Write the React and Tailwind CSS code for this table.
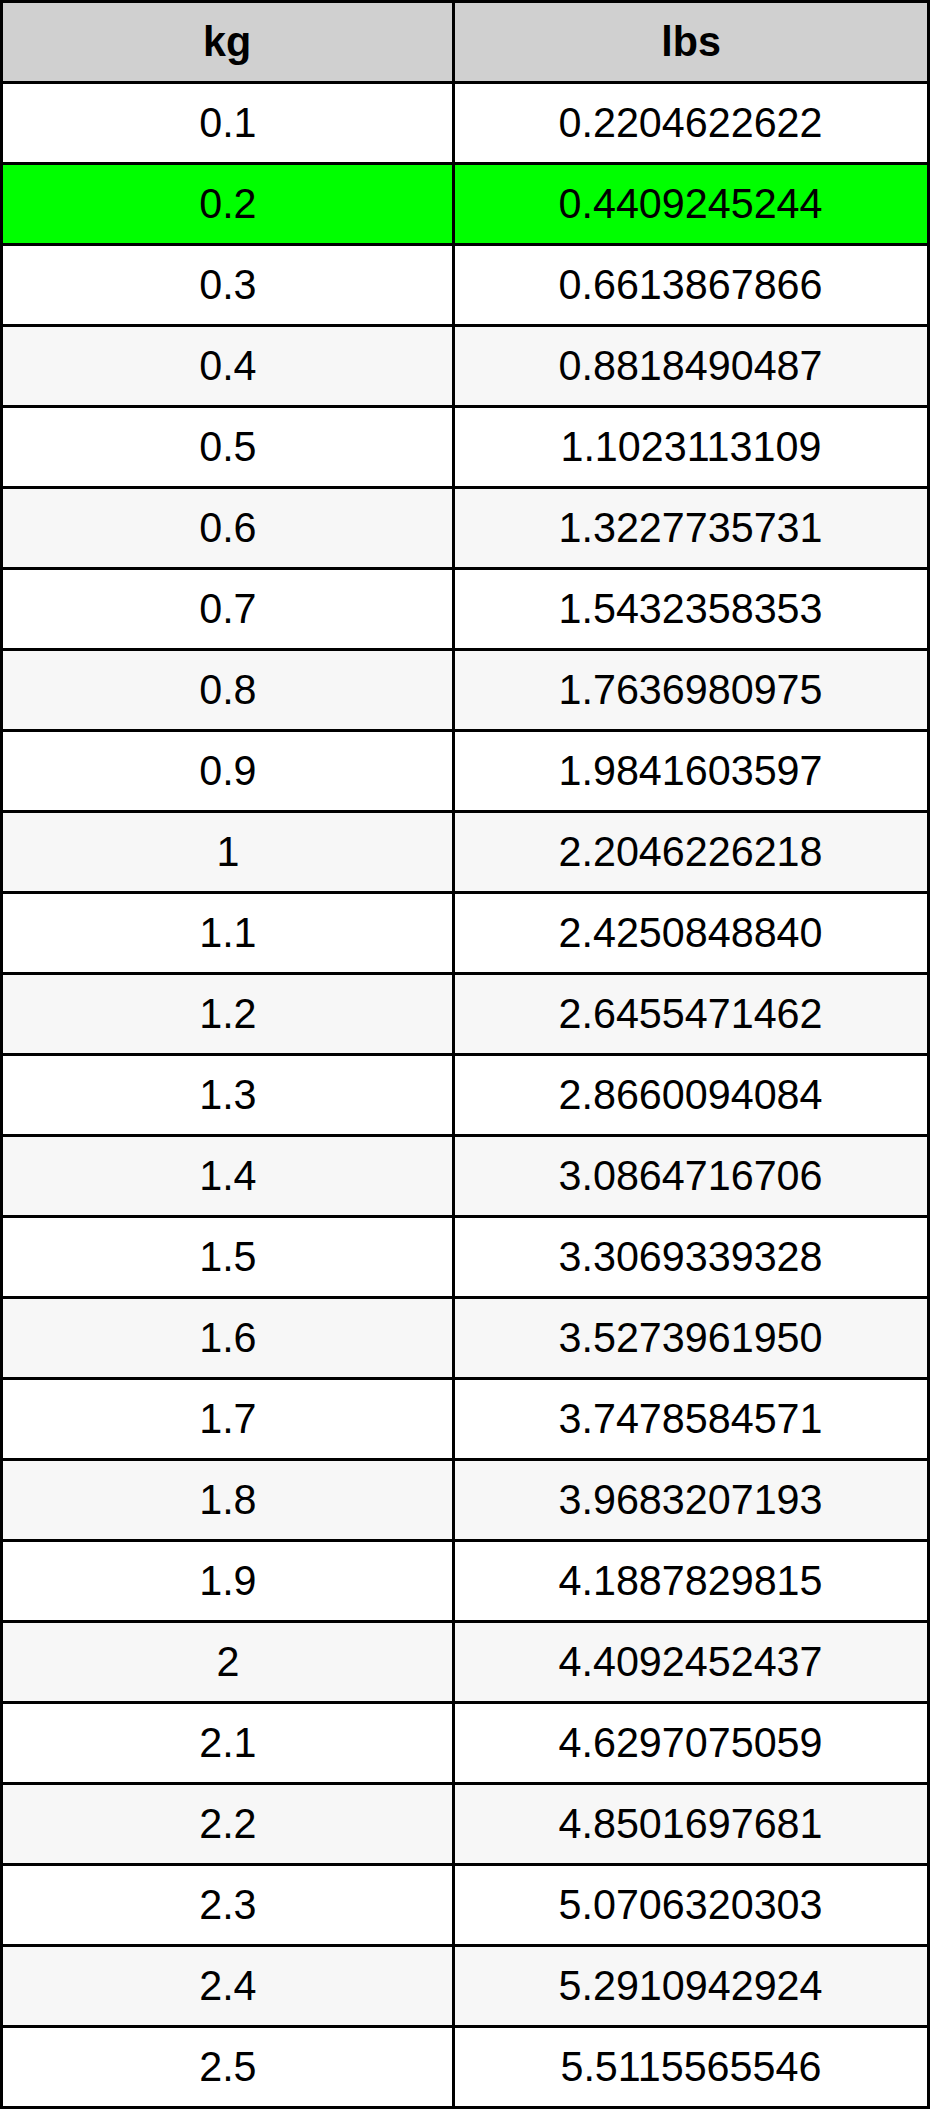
import React from 'react';

const rows = [
  ['0.1', '0.2204622622'],
  ['0.2', '0.4409245244'],
  ['0.3', '0.6613867866'],
  ['0.4', '0.8818490487'],
  ['0.5', '1.1023113109'],
  ['0.6', '1.3227735731'],
  ['0.7', '1.5432358353'],
  ['0.8', '1.7636980975'],
  ['0.9', '1.9841603597'],
  ['1', '2.2046226218'],
  ['1.1', '2.4250848840'],
  ['1.2', '2.6455471462'],
  ['1.3', '2.8660094084'],
  ['1.4', '3.0864716706'],
  ['1.5', '3.3069339328'],
  ['1.6', '3.5273961950'],
  ['1.7', '3.7478584571'],
  ['1.8', '3.9683207193'],
  ['1.9', '4.1887829815'],
  ['2', '4.4092452437'],
  ['2.1', '4.6297075059'],
  ['2.2', '4.8501697681'],
  ['2.3', '5.0706320303'],
  ['2.4', '5.2910942924'],
  ['2.5', '5.5115565546'],
];

const cell = 'h-[81px] flex items-center justify-center border-r-[3px] border-b-[3px] border-black';

const Txt = ({ children }) => (
  <span className="inline-block scale-x-[0.96] -translate-y-[1px]">{children}</span>
);

export default function App() {
  return (
    <div
      className="w-[930px] bg-white text-black text-[43px]"
      style={{ fontFamily: '"Liberation Sans", Arial, sans-serif' }}
    >
      <div className="grid grid-cols-[452px_475px] border-l-[3px] border-t-[3px] border-black">
        <div className={`${cell} bg-[#d0d0d0] font-bold`}><Txt>kg</Txt></div>
        <div className={`${cell} bg-[#d0d0d0] font-bold`}><Txt>lbs</Txt></div>
        {rows.map(([kg, lbs], i) => {
          const bg = i === 1 ? 'bg-[#00ff00]' : i % 2 === 1 ? 'bg-[#f7f7f7]' : 'bg-white';
          return (
            <React.Fragment key={kg}>
              <div className={`${cell} ${bg}`}><Txt>{kg}</Txt></div>
              <div className={`${cell} ${bg}`}><Txt>{lbs}</Txt></div>
            </React.Fragment>
          );
        })}
      </div>
    </div>
  );
}
